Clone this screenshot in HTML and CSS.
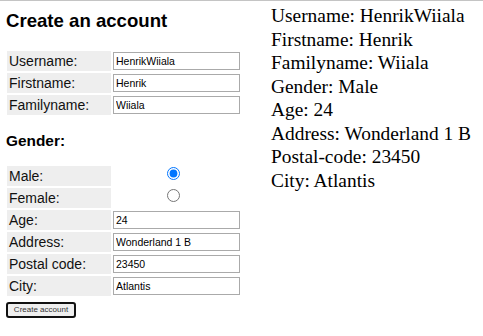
FILE: index.html
```html
<!DOCTYPE html>
<html lang="en">
<head>
    <meta charset="UTF-8">
    <title>Create an account</title>
    <link rel="stylesheet" href="styles.css">
</head>
<body>
    <div class="page">
        <div class="signup">
            <h3 class="title">Create an account</h3>
            <table class="fields">
                <tr><td class="label">Username:</td><td class="value"><input type="text" class="field" value="HenrikWiiala"></td></tr>
                <tr><td class="label">Firstname:</td><td class="value"><input type="text" class="field" value="Henrik"></td></tr>
                <tr><td class="label">Familyname:</td><td class="value"><input type="text" class="field" value="Wiiala"></td></tr>
            </table>
            <h4 class="subtitle">Gender:</h4>
            <table class="fields">
                <tr><td class="label">Male:</td><td class="value radio"><input type="radio" name="gender" checked></td></tr>
                <tr><td class="label">Female:</td><td class="value radio"><input type="radio" name="gender"></td></tr>
                <tr><td class="label">Age:</td><td class="value"><input type="text" class="field" value="24"></td></tr>
                <tr><td class="label">Address:</td><td class="value"><input type="text" class="field" value="Wonderland 1 B"></td></tr>
                <tr><td class="label">Postal code:</td><td class="value"><input type="text" class="field" value="23450"></td></tr>
                <tr><td class="label">City:</td><td class="value"><input type="text" class="field" value="Atlantis"></td></tr>
            </table>
            <button class="submit">Create account</button>
        </div>
        <div class="summary">
            <div>Username: HenrikWiiala</div>
            <div>Firstname: Henrik</div>
            <div>Familyname: Wiiala</div>
            <div>Gender: Male</div>
            <div>Age: 24</div>
            <div>Address: Wonderland 1 B</div>
            <div>Postal-code: 23450</div>
            <div>City: Atlantis</div>
        </div>
    </div>
</body>
</html>
```

FILE: styles.css
```css
html {
    border-top: 1px solid #c4c4c4;
}
body {
    margin: 0;
    background-color: #fff;
}
.page {
    display: flex;
    align-items: flex-start;
    gap: 29px;
    padding: 3px 0 0 5px;
}
.signup {
    width: 237px;
    font-family: "Liberation Sans", Arial, sans-serif;
}
.title {
    font-size: 18.6px;
    margin: 5.5px 0 17px 1px;
}
.subtitle {
    font-size: 15.4px;
    margin: 15px 0 14px 1px;
}
.fields {
    border-spacing: 2px;
}
.fields td {
    height: 20px;
    box-sizing: border-box;
}
.label {
    width: 104px;
    padding: 1px 2px;
    box-sizing: border-box;
    background-color: #eee;
    font-size: 14px;
    color: #111;
}
.value {
    padding: 1px 0;
}
.field {
    display: block;
    box-sizing: border-box;
    width: 127px;
    height: 18px;
    margin: 0;
    padding: 0 2px;
    border: 1px solid #aaa;
    font-family: "Liberation Sans", Arial, sans-serif;
    font-size: 10.5px;
    color: #000;
}
.value.radio {
    vertical-align: top;
    padding: 0 7px 0 0;
    text-align: center;
}
.value.radio input {
    width: 13px;
    height: 13px;
    margin: 0;
}
.submit {
    display: block;
    margin: 4px 0 0 1px;
    width: 70px;
    height: 16px;
    padding: 0;
    border: 2px solid #111;
    border-radius: 3px;
    background-color: #efefef;
    font-family: "Liberation Sans", Arial, sans-serif;
    font-size: 8px;
    color: #333;
}
.summary {
    font-family: "Liberation Serif", "Times New Roman", serif;
    font-size: 19.4px;
    line-height: 23.5px;
    color: #000;
}
```
